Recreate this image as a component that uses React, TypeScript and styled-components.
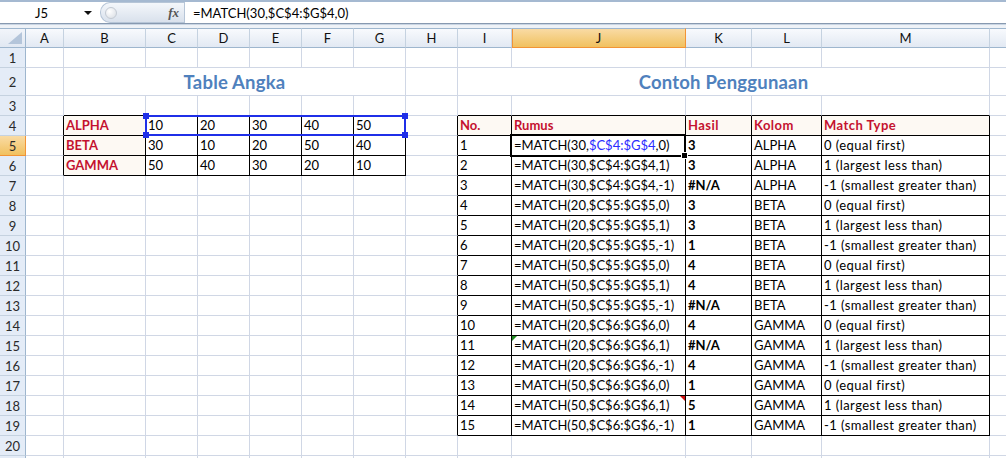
import React from 'react'
import styled, { createGlobalStyle } from 'styled-components'

const GRID = '#d0d7e5'
const BLACK = '#000'
const RED = '#c4122f'
const CREAM = '#fdf9f3'

// widths include the right gridline, like excel draws them
const COL_WIDTHS = [26, 38, 82, 52, 52, 52, 52, 52, 52, 54, 174, 66, 70, 168, 80]
const COL_NAMES = ['A', 'B', 'C', 'D', 'E', 'F', 'G', 'H', 'I', 'J', 'K', 'L', 'M', 'N']
const ROW_COUNT = 21
const VISIBLE_COLS = 13 // N is only partly on screen, its label falls outside
const VISIBLE_ROWS = 20
const ACTIVE_COL = 10 // J
const ACTIVE_ROW = 5

const leftRows = [
  ['ALPHA', '10', '20', '30', '40', '50'],
  ['BETA', '30', '10', '20', '50', '40'],
  ['GAMMA', '50', '40', '30', '20', '10'],
]

const headers = ['No.', 'Rumus', 'Hasil', 'Kolom', 'Match Type']

const examples = [
  ['=MATCH(30,$C$4:$G$4,0)', '3', 'ALPHA', '0 (equal first)'],
  ['=MATCH(30,$C$4:$G$4,1)', '3', 'ALPHA', '1 (largest less than)'],
  ['=MATCH(30,$C$4:$G$4,-1)', '#N/A', 'ALPHA', '-1 (smallest greater than)'],
  ['=MATCH(20,$C$5:$G$5,0)', '3', 'BETA', '0 (equal first)'],
  ['=MATCH(20,$C$5:$G$5,1)', '3', 'BETA', '1 (largest less than)'],
  ['=MATCH(20,$C$5:$G$5,-1)', '1', 'BETA', '-1 (smallest greater than)'],
  ['=MATCH(50,$C$5:$G$5,0)', '4', 'BETA', '0 (equal first)'],
  ['=MATCH(50,$C$5:$G$5,1)', '4', 'BETA', '1 (largest less than)'],
  ['=MATCH(50,$C$5:$G$5,-1)', '#N/A', 'BETA', '-1 (smallest greater than)'],
  ['=MATCH(20,$C$6:$G$6,0)', '4', 'GAMMA', '0 (equal first)'],
  ['=MATCH(20,$C$6:$G$6,1)', '#N/A', 'GAMMA', '1 (largest less than)'],
  ['=MATCH(20,$C$6:$G$6,-1)', '4', 'GAMMA', '-1 (smallest greater than)'],
  ['=MATCH(50,$C$6:$G$6,0)', '1', 'GAMMA', '0 (equal first)'],
  ['=MATCH(50,$C$6:$G$6,1)', '5', 'GAMMA', '1 (largest less than)'],
  ['=MATCH(50,$C$6:$G$6,-1)', '1', 'GAMMA', '-1 (smallest greater than)'],
]

type CellSpec = {
  text: React.ReactNode
  bold?: boolean
  red?: boolean
  cream?: boolean
  wide?: boolean
}

const inTable = (r: number, c: number) =>
  (r >= 4 && r <= 6 && c >= 2 && c <= 7) || (r >= 4 && r <= 19 && c >= 9 && c <= 13)

const specFor = (r: number, c: number): CellSpec | null => {
  if (r >= 4 && r <= 6 && c >= 2 && c <= 7) {
    const row = leftRows[r - 4]
    if (c === 2) return { text: row[0], bold: true, red: true, cream: true }
    return { text: row[c - 2] }
  }
  if (r === 4 && c >= 9 && c <= 13) {
    return { text: headers[c - 9], bold: true, red: true, cream: true, wide: c >= 11 }
  }
  if (r >= 5 && r <= 19 && c >= 9 && c <= 13) {
    const ex = examples[r - 5]
    if (c === 9) return { text: String(r - 4) }
    if (c === 10) return { text: ex[0] }
    if (c === 11) return { text: ex[1], bold: true }
    if (c === 12) return { text: ex[2] }
    return { text: ex[3], wide: true }
  }
  return null
}

const GlobalStyle = createGlobalStyle`
  html, body {
    margin: 0;
    padding: 0;
    background: #fff;
    overflow: hidden;
  }
  body {
    font-family: Lato, 'Liberation Sans', sans-serif;
    font-size: 13px;
    color: #000;
  }
`

const Window = styled.div`
  width: 1006px;
  height: 458px;
  overflow: hidden;
`

const FormulaBar = styled.div`
  display: flex;
  height: 21px;
  border-top: 2px solid #a5b9d1;
  border-bottom: 1px solid #8799b0;
  background: #fff;
`

const NameBox = styled.div`
  position: relative;
  width: 97px;
  display: flex;
  align-items: center;
  padding-left: 35px;
  box-sizing: border-box;
  font-size: 13px;
`

const DropArrow = styled.span`
  position: absolute;
  right: 5px;
  top: 9px;
  border-left: 4px solid transparent;
  border-right: 4px solid transparent;
  border-top: 4px solid #111;
`

const FxPill = styled.div`
  position: relative;
  margin-left: 3px;
  width: 84px;
  box-sizing: border-box;
  border: 1px solid #b6c5d7;
  border-right: none;
  border-radius: 10px 0 0 10px;
  background: linear-gradient(#f4f7fb, #d9e1ec);
  display: flex;
  align-items: center;
  justify-content: space-between;
  padding: 0 5px 0 4px;
`

const Knob = styled.span`
  width: 10px;
  height: 10px;
  border-radius: 50%;
  border: 1px solid #c3cad3;
  background: radial-gradient(circle at 35% 35%, #ffffff, #d6dbe2);
`

const FxLabel = styled.span`
  font-family: 'Liberation Serif', serif;
  font-style: italic;
  font-weight: bold;
  font-size: 13px;
  color: #555;
`

const FormulaInput = styled.div`
  flex: 1;
  border-left: 1px solid #b6c5d7;
  display: flex;
  align-items: center;
  padding-left: 8px;
  font-size: 13px;
`

const BarGap = styled.div`
  height: 4px;
  background: #eef2f7;
  border-top: 1px solid #c9d5e3;
  box-sizing: border-box;
`

const Sheet = styled.div`
  display: grid;
  grid-template-columns: ${COL_WIDTHS.map((w) => `${w}px`).join(' ')};
  grid-template-rows: 20px 20px 28px repeat(${ROW_COUNT - 2}, 20px);
`

const Corner = styled.div`
  box-sizing: border-box;
  border-top: 1px solid #9eb6ce;
  border-right: 1px solid #9eb6ce;
  border-bottom: 1px solid #9eb6ce;
  background: linear-gradient(#f2f5fa, #e1e8f2);
  display: flex;
  align-items: flex-end;
  justify-content: flex-end;
  padding: 0 2px 2px 0;
`

const ColHeader = styled.div<{ $active?: boolean }>`
  box-sizing: border-box;
  border-top: 1px solid #9eb6ce;
  border-right: 1px solid ${(p) => (p.$active ? '#f29436' : '#c5d2e0')};
  border-bottom: 1px solid ${(p) => (p.$active ? '#f29436' : '#9eb6ce')};
  box-shadow: ${(p) => (p.$active ? 'inset 1px 0 #f29436' : 'none')};
  background: ${(p) =>
    p.$active ? 'linear-gradient(#f9dba4, #f1c15f)' : 'linear-gradient(#f8fafd, #e2e9f3)'};
  display: flex;
  align-items: center;
  justify-content: center;
  font-size: 13px;
  color: #111;
`

const RowHeader = styled.div<{ $active?: boolean }>`
  box-sizing: border-box;
  border-right: 1px solid ${(p) => (p.$active ? '#f29436' : '#9eb6ce')};
  border-bottom: 1px solid ${(p) => (p.$active ? '#f29436' : '#c5d2e0')};
  background: ${(p) => (p.$active ? 'linear-gradient(#f9dba4, #f1c15f)' : '#e4ecf7')};
  display: flex;
  align-items: center;
  justify-content: center;
  font-size: 13px;
  color: #2a2a2a;
`

const Cell = styled.div<{ $right: string; $bottom: string; $bg?: string; $span?: number; $center?: boolean }>`
  position: relative;
  box-sizing: border-box;
  grid-column: span ${(p) => p.$span ?? 1};
  border-right: 1px solid ${(p) => p.$right};
  border-bottom: 1px solid ${(p) => p.$bottom};
  background: ${(p) => p.$bg ?? '#fff'};
  display: flex;
  align-items: flex-end;
  justify-content: ${(p) => (p.$center ? 'center' : 'flex-start')};
  padding: 0 2px 1px 2px;
  white-space: nowrap;
  font-size: 13px;
  line-height: 17px;
`

const CellText = styled.span<{ $bold?: boolean; $red?: boolean; $wide?: boolean }>`
  font-weight: ${(p) => (p.$bold ? 700 : 400)};
  color: ${(p) => (p.$red ? RED : '#000')};
  letter-spacing: ${(p) => (p.$wide ? '0.45px' : 'normal')};
`

const Title = styled.span`
  font-size: 18.5px;
  font-weight: 700;
  line-height: 24px;
  color: #4f81bd;
  letter-spacing: 0.2px;
`

const RefText = styled.span`
  color: #2b2bff;
`

const RefRange = styled.div`
  position: absolute;
  left: -1px;
  top: -1px;
  width: 261px;
  height: 21px;
  box-sizing: border-box;
  border: 2px solid #1f2fe8;
  z-index: 3;
  pointer-events: none;
`

const RefHandle = styled.span<{ $x: 'left' | 'right'; $y: 'top' | 'bottom' }>`
  position: absolute;
  ${(p) => p.$x}: -4px;
  ${(p) => p.$y}: -4px;
  width: 6px;
  height: 6px;
  background: #1f2fe8;
`

const ActiveBox = styled.div`
  position: absolute;
  left: -2px;
  top: -2px;
  width: 176px;
  height: 23px;
  box-sizing: border-box;
  border: 2px solid #000;
  z-index: 3;
  pointer-events: none;
`

const FillHandle = styled.span`
  position: absolute;
  right: -4px;
  bottom: -4px;
  width: 5px;
  height: 5px;
  background: #000;
  border: 1px solid #fff;
`

const Marker = styled.span<{ $side: 'left' | 'right'; $color: string }>`
  position: absolute;
  top: 0;
  ${(p) => p.$side}: 0;
  width: 0;
  height: 0;
  border-top: 5px solid ${(p) => p.$color};
  ${(p) =>
    p.$side === 'left' ? 'border-right: 5px solid transparent;' : 'border-left: 5px solid transparent;'}
  z-index: 2;
`

const edgeRight = (r: number, c: number) => (inTable(r, c) || inTable(r, c + 1) ? BLACK : GRID)
const edgeBottom = (r: number, c: number) => (inTable(r, c) || inTable(r + 1, c) ? BLACK : GRID)

const renderCell = (r: number, c: number) => {
  const spec = specFor(r, c)
  let text: React.ReactNode = spec?.text
  if (r === ACTIVE_ROW && c === ACTIVE_COL) {
    text = (
      <>
        =MATCH(30,<RefText>$C$4:$G$4</RefText>,0)
      </>
    )
  }
  return (
    <Cell key={`${r}-${c}`} $right={edgeRight(r, c)} $bottom={edgeBottom(r, c)} $bg={spec?.cream ? CREAM : undefined}>
      {spec && (
        <CellText $bold={spec.bold} $red={spec.red} $wide={spec.wide}>
          {text}
        </CellText>
      )}
      {r === 4 && c === 3 && (
        <RefRange>
          <RefHandle $x='left' $y='top' />
          <RefHandle $x='right' $y='top' />
          <RefHandle $x='left' $y='bottom' />
          <RefHandle $x='right' $y='bottom' />
        </RefRange>
      )}
      {r === ACTIVE_ROW && c === ACTIVE_COL && (
        <ActiveBox>
          <FillHandle />
        </ActiveBox>
      )}
      {r === 15 && c === 10 && <Marker $side='left' $color='#1f8a1f' />}
      {r === 18 && c === 10 && <Marker $side='right' $color='#d01010' />}
    </Cell>
  )
}

const renderRow = (r: number) => {
  const cells: React.ReactNode[] = []
  if (r === 2) {
    cells.push(renderCell(2, 1))
    cells.push(
      <Cell key='2-title-left' $span={6} $center $right={GRID} $bottom={GRID}>
        <Title>Table Angka</Title>
      </Cell>
    )
    cells.push(renderCell(2, 8))
    cells.push(
      <Cell key='2-title-right' $span={5} $center $right={GRID} $bottom={GRID}>
        <Title>Contoh Penggunaan</Title>
      </Cell>
    )
    cells.push(renderCell(2, 14))
  } else {
    for (let c = 1; c <= COL_NAMES.length; c++) cells.push(renderCell(r, c))
  }
  return (
    <React.Fragment key={r}>
      <RowHeader $active={r === ACTIVE_ROW}>{r <= VISIBLE_ROWS ? r : ''}</RowHeader>
      {cells}
    </React.Fragment>
  )
}

const App = () => {
  const rows = Array.from({ length: ROW_COUNT }, (_, i) => i + 1)

  return (
    <Window>
      <GlobalStyle />
      <FormulaBar>
        <NameBox>
          J5
          <DropArrow />
        </NameBox>
        <FxPill>
          <Knob />
          <FxLabel>fx</FxLabel>
        </FxPill>
        <FormulaInput>=MATCH(30,$C$4:$G$4,0)</FormulaInput>
      </FormulaBar>
      <BarGap />
      <Sheet>
        <Corner>
          <svg width='16' height='14' viewBox='0 0 16 14'>
            <polygon points='1,13 15,13 15,1' fill='#b4c5da' />
          </svg>
        </Corner>
        {COL_NAMES.map((name, i) => (
          <ColHeader key={name} $active={i + 1 === ACTIVE_COL}>
            {i < VISIBLE_COLS ? name : ''}
          </ColHeader>
        ))}
        {rows.map(renderRow)}
      </Sheet>
    </Window>
  )
}

export default App
